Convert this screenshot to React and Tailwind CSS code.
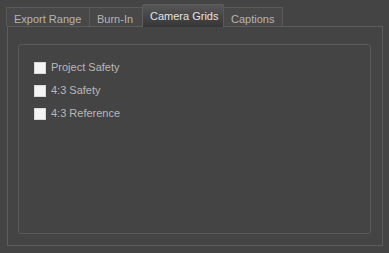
import { useState } from "react"

const tabs = ["Export Range", "Burn-In", "Camera Grids", "Captions"]
const widths = ["w-[84px]", "w-[54px]", "w-[82px]", "w-[60px]"]

function Check({ label }) {
  const [on, setOn] = useState(false)
  return (
    <label className="flex h-[23px] items-center gap-[5px] text-[#b8b8b8] select-none">
      <span
        onClick={() => setOn(!on)}
        className="flex h-[12px] w-[12px] items-center justify-center border border-[#d8d8d8] bg-[#f4f4f4] text-[9px] leading-none text-[#333]"
      >
        {on ? "✓" : ""}
      </span>
      {label}
    </label>
  )
}

export default function App() {
  const [active, setActive] = useState(2)

  return (
    <div className="h-[253px] w-[389px] bg-[#444444] pl-[6px] pt-[4px] font-['Liberation_Sans',Arial,sans-serif] text-[11px]">
      <div className="relative z-10 flex h-[22px] items-end">
        {tabs.map((t, i) =>
          i === active ? (
            <button
              key={t}
              onClick={() => setActive(i)}
              className={`${widths[i]} -mb-px -ml-px flex h-[23px] items-start rounded-t-[2px] border border-b-0 border-[#5e5e5e] bg-gradient-to-b from-[#575757] to-[#363636] pl-[7px] pt-[3px] text-[#e4e4e4]`}
            >
              {t}
            </button>
          ) : (
            <button
              key={t}
              onClick={() => setActive(i)}
              className={`${widths[i]} -ml-px flex h-[19px] items-start border border-b-0 border-[#5a5a5a] bg-[#484848] pl-[7px] pt-[3px] text-[#b4b4b4] first:ml-0`}
            >
              {t}
            </button>
          )
        )}
      </div>
      <div className="ml-px h-[220px] w-[376px] border border-[#5d5d5d] pl-[10px] pt-[17px]">
        <div className="h-[190px] w-[353px] rounded-[3px] border border-[#5a5a5a] pl-[15px] pt-[11px]">
          <Check label="Project Safety" />
          <Check label="4:3 Safety" />
          <Check label="4:3 Reference" />
        </div>
      </div>
    </div>
  )
}
